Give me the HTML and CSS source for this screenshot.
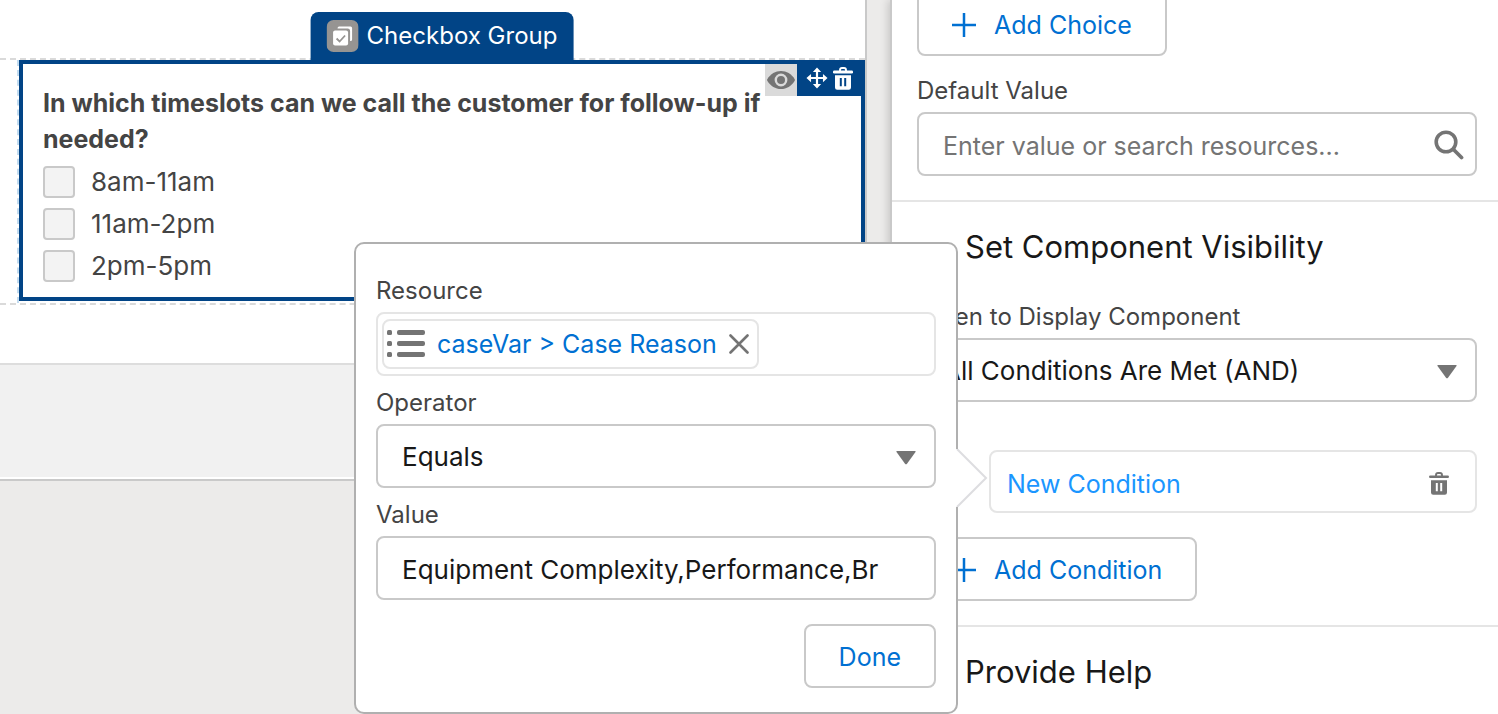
FILE: index.html
```html
<!DOCTYPE html>
<html lang="en">
<head>
<meta charset="utf-8">
<title>Screen Flow Editor</title>
<link rel="stylesheet" href="styles.css">
</head>
<body>
<div class="app">
  <main class="workspace">
    <div class="screen">
      <div class="section">
        <div class="gutter-column"></div>
        <div class="column">
          <section class="component" aria-label="Checkbox Group">
            <div class="component-tab">
              <svg class="tab-icon" viewBox="0 0 32 32" aria-hidden="true"><rect width="32" height="32" rx="7" fill="#969492"/><path d="M11 8.500V8q0-1.500 1.500-1.500H24q1.500 0 1.500 1.500v11.500q0 1.500-1.500 1.500h-.5V11q0-2.500-2.500-2.500z" fill="#fff"/><rect x="6.500" y="10.500" width="15" height="15" rx="2" fill="#fff"/><path d="M10 18.500l3 3 5.500-6" fill="none" stroke="#969492" stroke-width="1.800"/></svg>
              <span>Checkbox Group</span>
            </div>
            <div class="toolbar">
              <button class="tool tool-eye" type="button" aria-label="Visibility"><svg viewBox="0 0 28 20" width="28" height="20"><path d="M.3 9.300C3.500 3.800 8.500 1 14 1s10.500 2.800 13.700 8.300q.4.700 0 1.400C24.500 16.200 19.500 19 14 19S3.500 16.200.3 10.700q-.4-.7 0-1.400z" fill="#747474"/><circle cx="14" cy="10" r="5.200" fill="#747474" stroke="#dadada" stroke-width="2.400"/></svg></button>
              <button class="tool" type="button" aria-label="Move"><svg viewBox="0 0 24 24" width="22" height="24"><path d="M12 3v18M3 12h18" stroke="#fff" stroke-width="2.400"/><path d="M12 .5l4.500 5h-9zM12 23.500l4.500-5h-9zM.5 12l5-4.500v9zM23.500 12l-5-4.500v9z" fill="#fff"/></svg></button>
              <button class="tool" type="button" aria-label="Delete"><svg class="trash" viewBox="0 0 20 23" width="20" height="23"><path d="M7 4V3q0-2 2-2h2q2 0 2 2v1" fill="none" stroke="currentColor" stroke-width="1.900"/><rect y="3.600" width="20" height="2.800" rx="1.200" fill="currentColor"/><path fill-rule="evenodd" d="M2 8.200h16V20.500q0 2.200-2.200 2.200H4.200Q2 22.700 2 20.500zM6.800 11v8.200h2V11zM11.200 11v8.200h2V11z" fill="currentColor"/></svg></button>
            </div>
            <fieldset class="choices">
              <legend>In which timeslots can we call the customer for follow-up if needed?</legend>
              <label class="choice"><input type="checkbox"><span>8am-11am</span></label>
              <label class="choice"><input type="checkbox"><span>11am-2pm</span></label>
              <label class="choice"><input type="checkbox"><span>2pm-5pm</span></label>
            </fieldset>
          </section>
        </div>
      </div>
      <div class="screen-footer"></div>
    </div>
  </main>

  <aside class="panel">
    <section class="panel-section first">
      <button class="button" type="button"><svg class="plus" viewBox="0 0 24 24" aria-hidden="true"><path d="M12 0v24M0 12h24"/></svg>Add Choice</button>
      <div class="field spaced">
        <label for="default-value">Default Value</label>
        <div class="control">
          <input id="default-value" type="text" placeholder="Enter value or search resources...">
          <svg class="search" viewBox="0 0 30 30" aria-hidden="true"><circle cx="12" cy="12" r="9.800" fill="none" stroke="#747474" stroke-width="3.600"/><path d="M19.500 19.500l8 8" stroke="#747474" stroke-width="3.800" stroke-linecap="round"/></svg>
        </div>
      </div>
    </section>
    <section class="panel-section">
      <h2>Set Component Visibility</h2>
      <div class="field">
        <label for="when">When to Display Component</label>
        <div class="control">
          <select id="when"><option>All Conditions Are Met (AND)</option></select>
          <svg class="caret" viewBox="0 0 20 14" aria-hidden="true"><path d="M1 0h18q1.200 0 .5 1l-8.500 11.800q-1 1-2 0L.5 1Q-.2 0 1 0z"/></svg>
        </div>
      </div>
      <div class="condition">
        <a href="#condition">New Condition</a>
        <button class="icon-button" type="button" aria-label="Delete condition"><svg class="trash" viewBox="0 0 20 23" width="20" height="23"><path d="M7 4V3q0-2 2-2h2q2 0 2 2v1" fill="none" stroke="currentColor" stroke-width="1.900"/><rect y="3.600" width="20" height="2.400" rx="1.200" fill="currentColor"/><path fill-rule="evenodd" d="M2 8.200h16V20.500q0 2.200-2.200 2.200H4.200Q2 22.700 2 20.500zM6.800 11v8.200h2V11zM11.200 11v8.200h2V11z" fill="currentColor"/></svg></button>
        <div class="popover" role="dialog" aria-label="Edit condition">
          <div class="field">
            <label for="remove-resource">Resource</label>
            <div class="pill-box">
              <span class="pill">
                <svg class="list" viewBox="0 0 38 28" aria-hidden="true"><g fill="#747474"><rect width="5" height="5" rx="1.500"/><rect y="11" width="5" height="5" rx="1.500"/><rect y="22" width="5" height="5" rx="1.500"/><rect x="10" width="28" height="5" rx="2"/><rect x="10" y="11" width="28" height="5" rx="2"/><rect x="10" y="22" width="28" height="5" rx="2"/></g></svg>
                <a href="#resource">caseVar &gt; Case Reason</a>
                <button class="icon-button" id="remove-resource" type="button" aria-label="Remove"><svg viewBox="0 0 20 20" width="20" height="20"><path d="M1.500 1.500l17 17M18.500 1.500l-17 17" stroke="#747474" stroke-width="2.600" stroke-linecap="round"/></svg></button>
              </span>
            </div>
          </div>
          <div class="field">
            <label for="operator">Operator</label>
            <div class="control">
              <select id="operator"><option>Equals</option></select>
              <svg class="caret" viewBox="0 0 20 14" aria-hidden="true"><path d="M1 0h18q1.200 0 .5 1l-8.500 11.800q-1 1-2 0L.5 1Q-.2 0 1 0z"/></svg>
            </div>
          </div>
          <div class="field">
            <label for="value">Value</label>
            <div class="control"><input id="value" type="text" value="Equipment Complexity,Performance,Br"></div>
          </div>
          <div class="actions"><button class="button" type="button">Done</button></div>
          <svg class="nubbin" viewBox="0 0 32 58" aria-hidden="true"><path d="M0 0h2l29 29L2 58H0z" fill="#fff"/><path d="M1 0l29 29L1 58" fill="none" stroke="#dddde0" stroke-width="2"/></svg>
        </div>
      </div>
      <button class="button" type="button"><svg class="plus" viewBox="0 0 24 24" aria-hidden="true"><path d="M12 0v24M0 12h24"/></svg>Add Condition</button>
    </section>
    <section class="panel-section">
      <h2>Provide Help</h2>
    </section>
  </aside>
</div>
</body>
</html>
```
FILE: styles.css
```css
* { box-sizing: border-box; }

body {
  margin: 0;
  overflow: hidden;
  background: #ecebea;
  color: #444;
  font: 25px/36px Inter, "Liberation Sans", sans-serif;
}

button, input, select { font: inherit; }
a { color: #0070d2; text-decoration: none; }

.app { display: flex; height: 100vh; }

/* Canvas */
.workspace { flex: 1; min-width: 0; padding-right: 23px; }

.screen {
  padding-top: 58px;
  background: #fff;
  border-right: 2px solid #c9c9c9;
  border-bottom: 2px solid #c9c9c9;
}

.section {
  display: flex;
  border-top: 2px dashed #dadada;
  border-bottom: 2px dashed #dadada;
}

.gutter-column { width: 17px; }

.column {
  flex: 1;
  padding-bottom: 2px;
  border-left: 2px dashed #c3dcf0;
}

.component {
  position: relative;
  padding: 21px 20px 10px;
  border: 4px solid #014486;
}

.component-tab {
  position: absolute;
  bottom: 100%;
  left: 50%;
  display: flex;
  align-items: center;
  gap: 8px;
  height: 52px;
  padding: 0 16px 4px;
  border-radius: 8px 8px 0 0;
  background: #014486;
  color: #fff;
  font-size: 24px;
  white-space: nowrap;
  transform: translateX(-50%);
}

.tab-icon { width: 32px; height: 32px; }

.toolbar {
  position: absolute;
  top: 0;
  right: 0;
  display: flex;
  height: 32px;
  padding-right: 5px;
  background: #014486;
}

.tool {
  display: grid;
  place-items: center;
  width: 26px;
  padding: 0 0 4px;
  border: 0;
  background: none;
  color: #fff;
}

.tool-eye { width: 32px; margin-right: 7px; padding: 0; background: #dadada; }

.choices { margin: 0; padding: 0; border: 0; }
.choices legend { padding: 0 64px 4px 0; font-weight: 700; }
.choice { display: flex; align-items: center; gap: 16px; height: 42px; font-size: 26px; }

.choice input {
  width: 32px;
  height: 32px;
  margin: 0;
  border: 2px solid #c9c9c9;
  border-radius: 4px;
  background: #f3f3f3;
  appearance: none;
}

.screen-footer {
  height: 116px;
  margin-top: 58px;
  border-top: 2px solid #dddddd;
  border-bottom: 2px solid #fff;
  background: #f1f1f1;
}

/* Properties panel */
.panel {
  position: relative;
  width: 608px;
  background: #fff;
  border-left: 2px solid #c9c9c9;
  box-shadow: -2px 0 8px rgba(0, 0, 0, .16);
}

.panel-section { padding: 24px 21px 24px 25px; border-bottom: 2px solid #e5e5e5; }
.panel-section.first { margin-top: -8px; padding-top: 0; }

h2 {
  margin: 0 0 22px 48px;
  color: #181818;
  font-size: 31px;
  font-weight: 400;
  line-height: 42px;
}

.button {
  display: inline-flex;
  align-items: center;
  height: 64px;
  padding: 2px 33px 0;
  border: 2px solid #c9c9c9;
  border-radius: 8px;
  background: #fff;
  color: #0070d2;
}

.plus { width: 24px; height: 24px; margin-right: 18px; stroke: #0070d2; stroke-width: 2.5; }

.field label { display: block; padding: 9px 0 3px; font-size: 24px; }
.field.spaced { margin-top: 8px; }
.control { position: relative; }

.control input, .control select {
  display: block;
  width: 100%;
  height: 64px;
  padding: 2px 24px 0;
  border: 2px solid #c9c9c9;
  border-radius: 8px;
  background: #fff;
  color: #181818;
  font-size: 26px;
  appearance: none;
}

.control input::placeholder { color: #747474; font-size: 25px; opacity: 1; }

.search { position: absolute; top: 18px; right: 13px; width: 30px; height: 30px; }
.caret { position: absolute; top: 27px; right: 20px; width: 20px; height: 14px; fill: #747474; }

.condition {
  position: relative;
  display: flex;
  align-items: center;
  justify-content: space-between;
  height: 63px;
  margin: 48px 0 24px 72px;
  padding: 4px 26px 0 16px;
  border: 2px solid #e5e5e5;
  border-radius: 8px;
}

.condition > a { color: #1b96ff; }

.icon-button { display: grid; place-items: center; padding: 0; border: 0; background: none; color: #747474; }

/* Condition editor */
.popover {
  position: absolute;
  right: calc(100% + 33px);
  top: -210px;
  width: 604px;
  padding: 20px 20px 24px;
  border: 2px solid #b0b0b0;
  border-radius: 10px;
  background: #fff;
}

.pill-box { height: 64px; padding: 5px 4px; border: 2px solid #e5e5e5; border-radius: 8px; }

.pill {
  display: inline-flex;
  align-items: center;
  gap: 12px;
  height: 50px;
  padding: 0 8px 0 3px;
  border: 2px solid #e5e5e5;
  border-radius: 8px;
}

.list { width: 38px; height: 28px; }
.actions { display: flex; justify-content: flex-end; margin-top: 24px; }
.nubbin { position: absolute; top: 205px; left: 100%; width: 32px; height: 58px; }
```
